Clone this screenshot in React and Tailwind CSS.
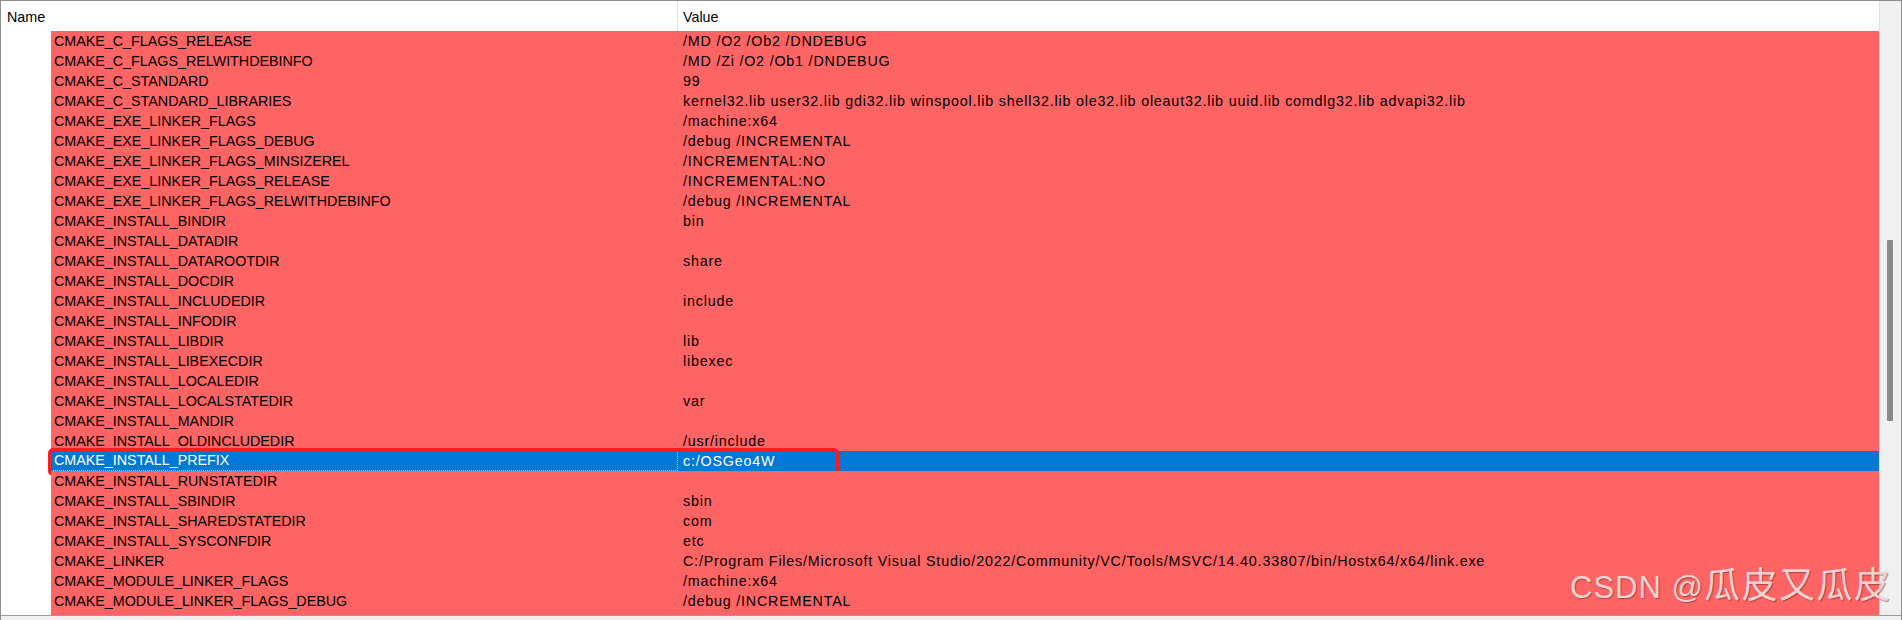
import React from 'react';

// CMake cache entries, as listed in the cmake-gui tree
const entries = [
  ['CMAKE_C_FLAGS_RELEASE', '/MD /O2 /Ob2 /DNDEBUG'],
  ['CMAKE_C_FLAGS_RELWITHDEBINFO', '/MD /Zi /O2 /Ob1 /DNDEBUG'],
  ['CMAKE_C_STANDARD', '99'],
  ['CMAKE_C_STANDARD_LIBRARIES', 'kernel32.lib user32.lib gdi32.lib winspool.lib shell32.lib ole32.lib oleaut32.lib uuid.lib comdlg32.lib advapi32.lib'],
  ['CMAKE_EXE_LINKER_FLAGS', '/machine:x64'],
  ['CMAKE_EXE_LINKER_FLAGS_DEBUG', '/debug /INCREMENTAL'],
  ['CMAKE_EXE_LINKER_FLAGS_MINSIZEREL', '/INCREMENTAL:NO'],
  ['CMAKE_EXE_LINKER_FLAGS_RELEASE', '/INCREMENTAL:NO'],
  ['CMAKE_EXE_LINKER_FLAGS_RELWITHDEBINFO', '/debug /INCREMENTAL'],
  ['CMAKE_INSTALL_BINDIR', 'bin'],
  ['CMAKE_INSTALL_DATADIR', ''],
  ['CMAKE_INSTALL_DATAROOTDIR', 'share'],
  ['CMAKE_INSTALL_DOCDIR', ''],
  ['CMAKE_INSTALL_INCLUDEDIR', 'include'],
  ['CMAKE_INSTALL_INFODIR', ''],
  ['CMAKE_INSTALL_LIBDIR', 'lib'],
  ['CMAKE_INSTALL_LIBEXECDIR', 'libexec'],
  ['CMAKE_INSTALL_LOCALEDIR', ''],
  ['CMAKE_INSTALL_LOCALSTATEDIR', 'var'],
  ['CMAKE_INSTALL_MANDIR', ''],
  ['CMAKE_INSTALL_OLDINCLUDEDIR', '/usr/include'],
  ['CMAKE_INSTALL_PREFIX', 'c:/OSGeo4W'],
  ['CMAKE_INSTALL_RUNSTATEDIR', ''],
  ['CMAKE_INSTALL_SBINDIR', 'sbin'],
  ['CMAKE_INSTALL_SHAREDSTATEDIR', 'com'],
  ['CMAKE_INSTALL_SYSCONFDIR', 'etc'],
  ['CMAKE_LINKER', 'C:/Program Files/Microsoft Visual Studio/2022/Community/VC/Tools/MSVC/14.40.33807/bin/Hostx64/x64/link.exe'],
  ['CMAKE_MODULE_LINKER_FLAGS', '/machine:x64'],
  ['CMAKE_MODULE_LINKER_FLAGS_DEBUG', '/debug /INCREMENTAL'],
  // next row is scrolled mostly out of view, only its top edge shows
  ['', ''],
];

const SELECTED = 'CMAKE_INSTALL_PREFIX';

const Row = ({ name, value }) => {
  const selected = name === SELECTED;
  return (
    <div className="flex h-[20px] shrink-0 pl-[50px]">
      <div className={`relative flex flex-1 ${selected ? 'bg-[#0078d7] text-white' : 'bg-[#ff6464] text-black'}`}>
        <div
          className={`w-[627px] shrink-0 pl-[3px] whitespace-nowrap ${
            selected ? 'border-r border-b border-dotted border-[#b9cfe6] leading-[19px]' : 'leading-[20px]'
          }`}
        >
          {name}
        </div>
        <div className="flex-1 pl-[5px] leading-[20px] tracking-[0.8px] whitespace-nowrap">{value}</div>
        {selected && (
          <div className="pointer-events-none absolute -left-[3px] -top-[3px] h-[28px] w-[791px] rounded-[5px] border-[4px] border-[#fe1c1c]" />
        )}
      </div>
    </div>
  );
};

const App = () => {
  return (
    <div className="relative flex h-[620px] w-[1902px] flex-col overflow-hidden border-x border-t border-[#8e8e8e] bg-white font-['Liberation_Sans',Arial,sans-serif] text-[14.3px] text-black">
      <div className="flex h-[614px] shrink-0">
        {/* tree view */}
        <div className="flex flex-1 flex-col overflow-hidden">
          <div className="flex h-[30px] shrink-0">
            <div className="w-[677px] shrink-0 border-r border-[#e5e5e5] pl-[6px] pt-[1px] leading-[30px]">Name</div>
            <div className="flex-1 pl-[5px] pt-[1px] leading-[30px]">Value</div>
          </div>
          {entries.map(([name, value], i) => (
            <Row key={name || i} name={name} value={value} />
          ))}
        </div>
        {/* vertical scrollbar */}
        <div className="flex w-[22px] shrink-0 flex-col border-l border-[#e0e0e0] bg-[#f0f0f0] pl-[7px] pt-[239px]">
          <div className="h-[181px] w-[6px] rounded-[1px] bg-[#8a8a8a]" />
        </div>
      </div>
      <div className="h-[1px] shrink-0 bg-[#9a9a9a]" />
      <div className="flex-1 bg-[#f0f0f0]" />

      {/* blog watermark */}
      <div className="pointer-events-none absolute left-[1569px] top-[563px] flex items-baseline whitespace-nowrap leading-none text-[#efd2d2] [text-shadow:1px_1px_1px_rgba(110,40,40,0.55)]">
        <span className="font-['Liberation_Sans',Arial,sans-serif] text-[31px] tracking-[1px]">CSDN @</span>
        <span className="font-['Noto_Sans_CJK_SC',sans-serif] text-[36px] tracking-[1.5px]">瓜皮又瓜皮</span>
      </div>
    </div>
  );
};

export default App;
